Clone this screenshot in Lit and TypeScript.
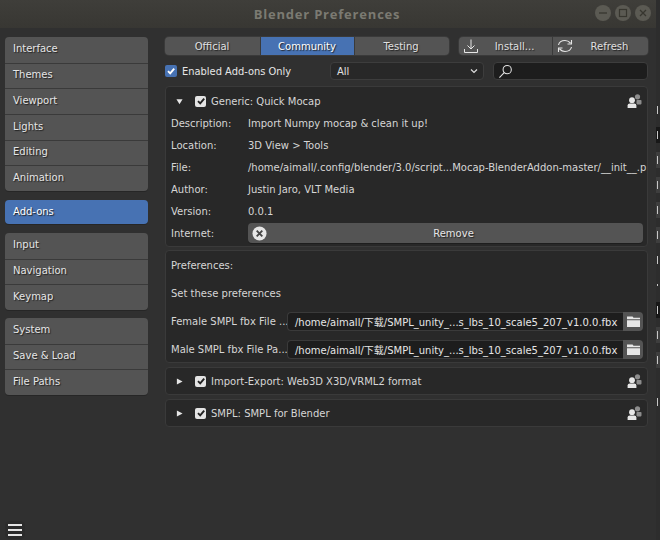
import { LitElement, html, css, svg } from 'lit';
import { customElement } from 'lit/decorators.js';

const groups = [
  ['Interface', 'Themes', 'Viewport', 'Lights', 'Editing', 'Animation'],
  ['Add-ons'],
  ['Input', 'Navigation', 'Keymap'],
  ['System', 'Save & Load', 'File Paths'],
];

const info = [
  ['Description:', 'Import Numpy mocap & clean it up!'],
  ['Location:', '3D View > Tools'],
  ['File:', '/home/aimall/.config/blender/3.0/script...Mocap-BlenderAddon-master/__init__.p'],
  ['Author:', 'Justin Jaro, VLT Media'],
  ['Version:', '0.0.1'],
];

const filePath = '/home/aimall/下载/SMPL_unity_...s_lbs_10_scale5_207_v1.0.0.fbx';

// slivers of the window behind: only a few pixels of each row are on screen
const behindBits = ['plain', 'dark', '', '', '', '', 'plain', 'plain short', 'dark', '', ''];

const check = html`<svg class="check" viewBox="0 0 10 10"><path d="M2 5.2 4.2 7.4 8.2 2.6" fill="none" stroke="#222" stroke-width="1.9"/></svg>`;

// the little "community" icon at the right of each add-on header
const community = html`<svg class="community" viewBox="0 0 16 16">
  <circle cx="11.5" cy="3.8" r="2.6" fill="#8c8c8c"/>
  <rect x="10.5" y="7" width="5" height="4.4" rx=".8" fill="#8c8c8c"/>
  <circle cx="6" cy="7.2" r="2.9" fill="#e6e6e6"/>
  <path d="M1.6 15V12.6Q1.6 10.8 3.8 10.6H8.2Q10.4 10.8 10.4 12.6V15Z" fill="#e6e6e6"/>
</svg>`;

const folder = html`<svg class="folder" viewBox="0 0 16 14"><path d="M1 1.5H7L8 3H15V4.6H1Z M1 5.6H15V13H1Z" fill="#e6e6e6"/></svg>`;

@customElement('app-root')
export class AppRoot extends LitElement {
  static styles = css`
    :host {
      display: block;
      width: 660px;
      height: 540px;
      overflow: hidden;
      background: #2e2e2e;
      font-family: "DejaVu Sans", "Noto Sans CJK SC", sans-serif;
      font-size: 10px;
      color: #e0e0e0;
    }
    .screen {
      display: flex;
      height: 540px;
    }
    .window {
      width: 656px;
      flex: none;
      display: flex;
      flex-direction: column;
    }
    .behind {
      flex: 1;
      display: flex;
      flex-direction: column;
      padding-top: 102px;
      gap: 9px;
      background: #2d2d2d;
    }
    .behind .bit {
      height: 16px;
      flex: none;
      background: #3e3e3e;
      display: flex;
      align-items: center;
      padding-left: 1px;
    }
    .behind .bit::after {
      content: "";
      width: 1px;
      height: 8px;
      background: #c8c8c8;
    }
    .behind .dark { background: #181818; }
    .behind .plain { background: none; }
    .behind .short::after { height: 2px; }
    .behind .last { margin-top: 17px; }

    .titlebar {
      height: 28px;
      flex: none;
      position: relative;
      display: flex;
      align-items: center;
      justify-content: center;
      background: linear-gradient(#3f3e3a, #383733);
      color: #7b7a72;
      font-family: "Open Sans", sans-serif;
      font-weight: 700;
      font-size: 13px;
      letter-spacing: .8px;
      padding-right: 2px;
      box-sizing: border-box;
    }
    .winbtns {
      position: absolute;
      left: 595px;
      top: 5px;
      display: flex;
      gap: 4px;
    }
    .winbtns svg { width: 16px; height: 16px; }

    .body {
      flex: 1;
      display: flex;
      position: relative;
      background: #303030;
    }
    .side {
      width: 143px;
      flex: none;
      margin: 9px 0 0 5px;
      display: flex;
      flex-direction: column;
      gap: 9px;
    }
    .group {
      background: #545454;
      border-radius: 4px;
      box-shadow: 0 1px 0 #262626;
    }
    .group:last-child { margin-top: -1px; }
    .group div {
      height: 25.67px;
      padding: 0 0 2px 8px;
      display: flex;
      align-items: center;
      color: #e6e6e6;
      text-shadow: 1px 1px 1px #222;
      border-top: 1px solid #3a3a3a;
      box-sizing: border-box;
    }
    .group div:first-child { border-top: none; }
    .group.active { background: #4772b3; }
    .group.active div { height: 24px; padding-bottom: 1px; color: #fff; }

    .main {
      width: 483px;
      flex: none;
      margin: 9px 0 0 17px;
      display: flex;
      flex-direction: column;
    }
    .toolbar {
      display: flex;
      height: 18px;
      gap: 10px;
    }
    .seg {
      display: flex;
      border-radius: 4px;
      overflow: hidden;
      background: #545454;
      box-shadow: 0 0 0 1px #3a3a3a;
      text-shadow: 1px 1px 1px #222;
    }
    .seg > div {
      display: flex;
      align-items: center;
      justify-content: center;
      box-sizing: border-box;
      border-left: 1px solid #3a3a3a;
    }
    .seg > div:first-child { border-left: none; }
    .tabs { width: 284px; }
    .tabs > div { width: 94px; padding-right: 1px; }
    .tabs > div:first-child { width: 95px; }
    .tabs .on { background: #4772b3; color: #fff; }
    .ops { width: 189px; }
    .ops > div { width: 93px; position: relative; padding-left: 18px; }
    .ops > div:last-child { width: 96px; }
    .ops svg { position: absolute; left: 4px; top: 1px; width: 16px; height: 16px; }

    .filters {
      margin-top: 7px;
      height: 18px;
      display: flex;
      align-items: center;
    }
    .enabled {
      width: 165px;
      display: flex;
      align-items: center;
      gap: 5px;
      color: #e6e6e6;
      font-size: 9.9px;
    }
    .box {
      width: 12px;
      height: 12px;
      border-radius: 2px;
      background: #4772b3;
      display: flex;
      align-items: center;
      justify-content: center;
      flex: none;
    }
    .check { width: 10px; height: 10px; }
    .blue .check path { stroke: #fff; }
    .light { width: 11px; height: 11px; background: #e4e4e4; }
    .select {
      width: 154px;
      height: 18px;
      box-sizing: border-box;
      background: #282828;
      border: 1px solid #3d3d3d;
      border-radius: 4px;
      display: flex;
      align-items: center;
      justify-content: space-between;
      padding: 0 5px 0 6px;
    }
    .select svg { width: 8px; height: 6px; }
    .search {
      margin-left: 9px;
      width: 155px;
      height: 18px;
      box-sizing: border-box;
      background: #1d1d1d;
      border: 1px solid #3d3d3d;
      border-radius: 4px;
      padding: 1px 0 0 4px;
    }
    .search svg { width: 15px; height: 15px; display: block; }

    .panel {
      background: #282828;
      border: 1px solid #3a3a3a;
      border-radius: 4px;
      box-sizing: border-box;
      padding: 0 4px 0 5px;
    }
    .first { margin-top: 6px; height: 161px; }
    .first .head { height: 28px; margin-bottom: -3px; }
    .prefs { margin-top: 3px; height: 113px; }
    .collapsed { margin-top: 4px; height: 28px; }

    .head {
      height: 26px;
      display: flex;
      align-items: center;
      color: #d6d6d6;
    }
    .head .tri { width: 7px; height: 7px; margin-left: 5px; flex: none; }
    .head .box { margin-left: 12px; margin-right: 5px; }
    .head .title { flex: 1; }
    .community { width: 16px; height: 16px; margin-right: 1px; }

    .row {
      height: 22px;
      display: flex;
      align-items: center;
      color: #d6d6d6;
    }
    .row .k { width: 77px; flex: none; }
    .row .v { white-space: nowrap; flex: 1; }
    .remove {
      flex: 1;
      height: 20px;
      border-radius: 4px;
      background: #545454;
      box-shadow: 0 1px 0 #1e1e1e;
      display: flex;
      align-items: center;
      justify-content: center;
      position: relative;
      padding-left: 16px;
      color: #e6e6e6;
      text-shadow: 1px 1px 1px #222;
    }
    .remove svg { position: absolute; left: 4px; top: 3px; width: 15px; height: 15px; }

    .pref-row {
      height: 28px;
      display: flex;
      align-items: center;
      color: #d6d6d6;
    }
    .pref-row .k {
      width: 116px;
      flex: none;
      white-space: nowrap;
    }
    .field {
      width: 336px;
      height: 19px;
      box-sizing: border-box;
      background: #1d1d1d;
      border: 1px solid #3a3a3a;
      border-right: none;
      border-radius: 4px 0 0 4px;
      padding-left: 7px;
      display: flex;
      align-items: center;
      white-space: nowrap;
      color: #e6e6e6;
    }
    .folderbtn {
      width: 20px;
      height: 19px;
      background: #545454;
      border-radius: 0 4px 4px 0;
      display: flex;
      align-items: center;
      justify-content: center;
    }
    .folder { width: 15px; height: 13px; }

    .burger {
      position: absolute;
      left: 8px;
      top: 496px;
      width: 14px;
      height: 12px;
      display: flex;
      flex-direction: column;
      justify-content: space-between;
      border-radius: 2px;
      box-shadow: 0 0 0 3px #2c2c2c;
      background: #2c2c2c;
    }
    .burger i { display: block; height: 2px; background: #e6e6e6; }
  `;

  private winBtn(glyph: unknown) {
    return svg`<svg viewBox="0 0 16 16"><circle cx="8" cy="8" r="8" fill="#5b5a53"/>${glyph}</svg>`;
  }

  private panelHead(title: string, open = false) {
    return html`<div class="head">
      <svg class="tri" viewBox="0 0 8 8"><path d=${open ? 'M.5 1.5H7.5L4 7Z' : 'M1 .5V7.5L7.5 4Z'} fill="#e6e6e6"/></svg>
      <span class="box light">${check}</span>
      <span class="title">${title}</span>
      ${community}
    </div>`;
  }

  render() {
    return html`<div class="screen">
      <div class="window">
        <div class="titlebar">
          Blender Preferences
          <div class="winbtns">
            ${this.winBtn(svg`<path d="M4 8H12" stroke="#37362f" stroke-width="1.3"/>`)}
            ${this.winBtn(svg`<rect x="4.5" y="4.5" width="7" height="7" fill="none" stroke="#37362f" stroke-width="1.2"/>`)}
            ${this.winBtn(svg`<path d="M5 5 11 11M11 5 5 11" stroke="#37362f" stroke-width="1.3"/>`)}
          </div>
        </div>
        <div class="body">
          <div class="side">
            ${groups.map(g => html`<div class="group ${g[0] === 'Add-ons' ? 'active' : ''}">
              ${g.map(name => html`<div>${name}</div>`)}
            </div>`)}
          </div>
          <div class="main">
            <div class="toolbar">
              <div class="seg tabs">
                <div>Official</div><div class="on">Community</div><div>Testing</div>
              </div>
              <div class="seg ops">
                <div>
                  <svg viewBox="0 0 16 16" fill="none" stroke="#e6e6e6" stroke-width="1"><path d="M8 1.5V11M4.5 7.5 8 11 11.5 7.5M1.5 11V14.5H14.5V11"/></svg>
                  Install...
                </div>
                <div>
                  <svg viewBox="0 0 16 16" fill="none" stroke="#e6e6e6" stroke-width="1.1"><path d="M1.5 7Q2.5 2.5 8 2.5 11 2.5 13.5 5M14.5 2V6H10.5M14.5 9Q13.5 13.5 8 13.5 5 13.5 2.5 11M1.5 14V10H5.5"/></svg>
                  Refresh
                </div>
              </div>
            </div>
            <div class="filters">
              <div class="enabled"><span class="box blue">${check}</span>Enabled Add-ons Only</div>
              <div class="select">All
                <svg viewBox="0 0 8 6"><path d="M1 1.5 4 4.5 7 1.5" fill="none" stroke="#ddd" stroke-width="1.2"/></svg>
              </div>
              <div class="search">
                <svg viewBox="0 0 16 16" fill="none" stroke="#e6e6e6" stroke-width="1.1"><circle cx="9.8" cy="6" r="4.4"/><path d="M6.6 9.2 1.5 14.5"/></svg>
              </div>
            </div>

            <div class="panel first">
              ${this.panelHead('Generic: Quick Mocap', true)}
              ${info.map(([k, v]) => html`<div class="row"><span class="k">${k}</span><span class="v">${v}</span></div>`)}
              <div class="row">
                <span class="k">Internet:</span>
                <div class="remove">
                  <svg viewBox="0 0 16 16"><circle cx="8" cy="8" r="7.5" fill="#e6e6e6"/><path d="M5 5 11 11M11 5 5 11" stroke="#444" stroke-width="2"/></svg>
                  Remove
                </div>
              </div>
            </div>

            <div class="panel prefs">
              <div class="pref-row">Preferences:</div>
              <div class="pref-row">Set these preferences</div>
              <div class="pref-row">
                <span class="k">Female SMPL fbx File ...</span>
                <div class="field">${filePath}</div>
                <div class="folderbtn">${folder}</div>
              </div>
              <div class="pref-row">
                <span class="k">Male SMPL fbx File Pa...</span>
                <div class="field">${filePath}</div>
                <div class="folderbtn">${folder}</div>
              </div>
            </div>

            <div class="panel collapsed">${this.panelHead('Import-Export: Web3D X3D/VRML2 format')}</div>
            <div class="panel collapsed">${this.panelHead('SMPL: SMPL for Blender')}</div>
          </div>
          <div class="burger"><i></i><i></i><i></i></div>
        </div>
      </div>
      <div class="behind">
        ${behindBits.map(cls => html`<div class="bit ${cls}"></div>`)}
        <div class="bit plain last"></div>
      </div>
    </div>`;
  }
}
